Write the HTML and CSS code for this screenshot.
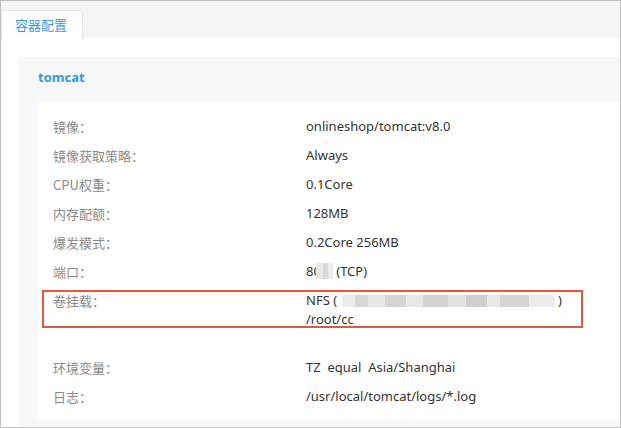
FILE: index.html
```html
<!DOCTYPE html>
<html lang="zh-CN">
<head>
<meta charset="utf-8">
<title>容器配置</title>
<link rel="stylesheet" href="styles.css">
</head>
<body>
<div class="frame">
  <div class="tabbar">
    <div class="tab">容器配置</div>
  </div>
  <div class="content">
    <div class="card">
      <div class="card-title">tomcat</div>
      <div class="panel">
        <div class="row"><div class="label">镜像：</div><div class="value">onlineshop/tomcat:v8.0</div></div>
        <div class="row"><div class="label">镜像获取策略：</div><div class="value">Always</div></div>
        <div class="row"><div class="label">CPU权重：</div><div class="value">0.1Core</div></div>
        <div class="row"><div class="label">内存配额：</div><div class="value">128MB</div></div>
        <div class="row"><div class="label">爆发模式：</div><div class="value">0.2Core 256MB</div></div>
        <div class="row"><div class="label">端口：</div><div class="value">80<span class="mask mask-port"></span> (TCP)</div></div>
        <div class="row row-tall"><div class="label">卷挂载：</div><div class="value"><div>NFS (<span class="mask mask-nfs"></span>)</div><div>/root/cc</div></div></div>
        <div class="row"><div class="label">环境变量：</div><div class="value">TZ&nbsp; equal&nbsp; Asia/Shanghai</div></div>
        <div class="row"><div class="label">日志：</div><div class="value">/usr/local/tomcat/logs/*.log</div></div>
        <div class="highlight"></div>
      </div>
    </div>
  </div>
</div>
</body>
</html>
```
FILE: styles.css
```css
html, body {
  margin: 0;
  padding: 0;
  background: #ffffff;
}
.frame {
  width: 621px;
  height: 428px;
  box-sizing: border-box;
  border: 1px solid #bfc1c1;
  overflow: hidden;
  font-family: "Noto Sans", "Noto Sans CJK SC", sans-serif;
  font-size: 13px;
}
.tabbar {
  height: 37px;
  box-sizing: border-box;
  padding-top: 9px;
  background: #f4f6f6;
  display: flex;
}
.tab {
  width: 82px;
  height: 28px;
  box-sizing: border-box;
  border: 1px solid #e2e5e7;
  border-bottom: none;
  border-radius: 3px 3px 0 0;
  background: #ffffff;
  color: #3d9be0;
  font-family: "Noto Sans CJK SC", sans-serif;
  font-size: 13px;
  line-height: 27px;
  text-align: center;
  padding-right: 2px;
}
.content {
  padding: 19px 0 0 18px;
  background: #ffffff;
}
.card {
  background: #f7f8fa;
  padding: 0 0 8px 19px;
}
.card-title {
  height: 45px;
  box-sizing: border-box;
  padding-top: 10px;
  line-height: 20px;
  color: #3399dd;
  font-family: "Open Sans", sans-serif;
  font-weight: 700;
  font-size: 13px;
}
.panel {
  position: relative;
  background: #ffffff;
  padding: 10px 0 9px 15px;
}
.row {
  display: flex;
  padding: 5px 0;
  line-height: 19px;
}
.row-tall {
  padding-bottom: 24px;
}
.label {
  width: 253px;
  flex: none;
  color: #8a8a8a;
  font-family: "Noto Sans CJK SC", sans-serif;
}
.value {
  color: #333333;
}
.mask {
  display: inline-block;
  vertical-align: middle;
  background-color: #e6e6e6;
}
.mask-port {
  position: relative;
  width: 17px;
  height: 16px;
  margin: -3px 0 0 -5px;
  background-image: linear-gradient(90deg, #e9e9e9 0 40%, #d9d9d9 40% 70%, #ececec 70% 100%);
}
.mask-nfs {
  width: 213px;
  height: 12px;
  margin: -2px 3px 0 5px;
  background-image:
    linear-gradient(90deg, #ececec 0 6%, #d8d8d8 6% 12%, #e6e6e6 12% 20%, #d4d4d4 20% 30%, #e8e8e8 30% 38%, #d2d2d2 38% 50%, #e2e2e2 50% 58%, #cfcfcf 58% 68%, #e9e9e9 68% 74%, #d6d6d6 74% 88%, #ececec 88% 100%);
}
.highlight {
  position: absolute;
  left: 4px;
  top: 188px;
  width: 541px;
  height: 38px;
  box-sizing: border-box;
  border: 2px solid #ef5533;
}
```
